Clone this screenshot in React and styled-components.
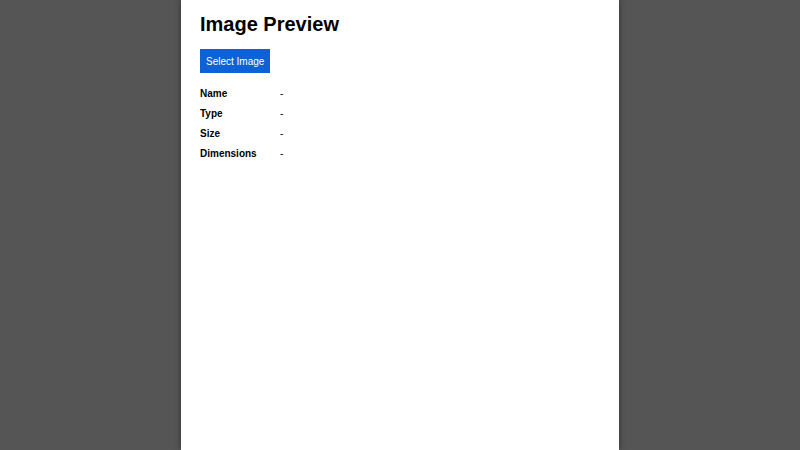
import React from 'react'
import styled, { createGlobalStyle } from 'styled-components'

const GlobalStyle = createGlobalStyle`
  html, body {
    margin: 0;
    padding: 0;
    height: 100%;
    background: #555555;
    font-family: "Liberation Sans", Arial, sans-serif;
  }
  #root {
    height: 100%;
  }
`

const Page = styled.div`
  display: flex;
  justify-content: center;
  height: 100%;
`

const Panel = styled.main`
  width: 400px;
  padding: 0 19px;
  background: #ffffff;
  box-shadow: 0 0 6px rgba(0, 0, 0, 0.45);
`

const Title = styled.h1`
  margin: 11px 0 12px;
  font-size: 20px;
  line-height: 26px;
  font-weight: 700;
  color: #000;
`

const SelectButton = styled.button`
  display: block;
  height: 24px;
  padding: 0 6px;
  border: none;
  border-radius: 0;
  background: #0f62d6;
  color: #fff;
  font-family: inherit;
  font-size: 10px;
  cursor: pointer;
`

const InfoList = styled.dl`
  display: grid;
  grid-template-columns: 80px 1fr;
  grid-auto-rows: 20px;
  align-items: center;
  margin: 10px 0 0;
  font-size: 10px;
  color: #000;
`

const Label = styled.dt`
  font-weight: 700;
`

const Value = styled.dd`
  margin: 0;
`

const fields = ['Name', 'Type', 'Size', 'Dimensions']

const App = () => {
  return (
    <>
      <GlobalStyle />
      <Page>
        <Panel>
          <Title>Image Preview</Title>
          <SelectButton>Select Image</SelectButton>
          <InfoList>
            {fields.map((field) => (
              <React.Fragment key={field}>
                <Label>{field}</Label>
                <Value>-</Value>
              </React.Fragment>
            ))}
          </InfoList>
        </Panel>
      </Page>
    </>
  )
}

export default App
